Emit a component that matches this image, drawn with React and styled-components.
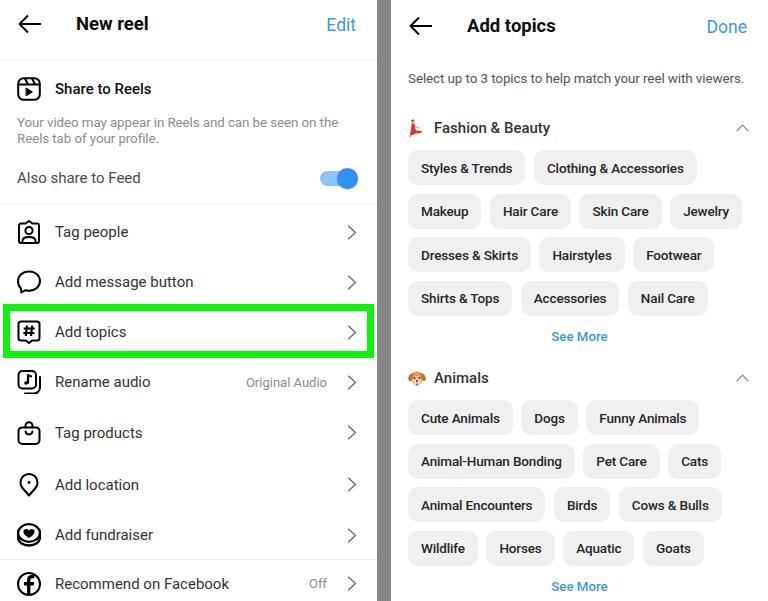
import React from 'react';
import styled, { createGlobalStyle } from 'styled-components';

const GlobalStyle = createGlobalStyle`
  html, body {
    margin: 0;
    padding: 0;
    background: #fff;
    font-family: Roboto, "Liberation Sans", sans-serif;
  }
`

const Line = (props) => (
  <svg viewBox="0 0 24 24" fill="none" stroke="#000" strokeWidth="2" strokeLinecap="round" strokeLinejoin="round" {...props} />
)

const BackArrow = () => (
  <Line width="24" height="24">
    <path d="M23 12H1.500M10 3.500L1.500 12l8.500 8.500" strokeWidth="1.900" strokeLinecap="butt" />
  </Line>
)

const ReelsIcon = () => (
  <Line width="24" height="24">
    <rect x="1.200" y="1.200" width="21.600" height="21.600" rx="5.500" />
    <path d="M1.500 7.400h21M8 1.500l3 5.800M15 1.500l3 5.800" />
    <path d="M9.400 11.200l6 3.700-6 3.700z" fill="#000" strokeWidth="1" />
  </Line>
)

const TagIcon = () => (
  <Line width="24" height="24">
    <path d="M8.500 3.500L12 1l3.500 2.500H20a2 2 0 0 1 2 2V21a2 2 0 0 1-2 2H4a2 2 0 0 1-2-2V5.500a2 2 0 0 1 2-2z" />
    <circle cx="12" cy="10.500" r="3.600" />
    <path d="M5.500 22.500v-1.500c0-2.500 2.500-4 6.500-4s6.500 1.500 6.500 4v1.500" />
  </Line>
)

const MessageIcon = () => (
  <Line width="24" height="24">
    <path d="M12 1.500c6.200 0 11 4 11 9.600s-4.800 9.600-11 9.600c-1.300 0-2.500-.2-3.600-.5L4.300 22.500l-.3-4C2 16.600 1 14.100 1 11.100 1 5.500 5.800 1.500 12 1.500z" />
  </Line>
)

const HashIcon = () => (
  <Line width="24" height="24">
    <path d="M4 1.500h16a2.500 2.500 0 0 1 2.500 2.500v14a2.500 2.500 0 0 1-2.500 2.500h-5L12 23l-3-2.500H4A2.500 2.500 0 0 1 1.500 18V4A2.500 2.500 0 0 1 4 1.500z" />
    <path d="M10 5.500L8.800 16M15.200 5.500L14 16M6.700 8.500h11M6.300 13h11" strokeWidth="2.200" strokeLinecap="butt" />
  </Line>
)

const AudioIcon = () => (
  <Line width="24" height="24">
    <rect x="1.500" y="1" width="17.500" height="17.500" rx="4" />
    <path d="M23 7v10.500a6 6 0 0 1-6 6H8" />
    <path d="M11 5v8" strokeWidth="2.200" />
    <path d="M11 5.500l3 .8" strokeWidth="2.200" />
    <circle cx="9" cy="13" r="1.800" fill="#000" stroke="none" />
  </Line>
)

const BagIcon = () => (
  <Line width="24" height="24">
    <path d="M5 6.500h14a3.500 3.500 0 0 1 3.500 3.500v9a4 4 0 0 1-4 4h-13a4 4 0 0 1-4-4v-9A3.500 3.500 0 0 1 5 6.500z" />
    <path d="M8.500 6.500V4.800a3.500 3.500 0 0 1 7 0v1.700" />
    <path d="M8.500 10.500c.5 2 1.800 3 3.500 3s3-1 3.500-3" />
  </Line>
)

const PinIcon = () => (
  <Line width="24" height="24">
    <path d="M12 22.500L5.520 15a8.500 8.500 0 1 1 12.960 0z" />
    <circle cx="12" cy="9.500" r="1.400" fill="#000" stroke="none" />
  </Line>
)

const FundIcon = () => (
  <Line width="24" height="24" strokeWidth="2.300">
    <ellipse cx="12" cy="10" rx="11" ry="8.800" />
    <path d="M1 10.500v4c0 4.800 5 8 11 8s11-3.200 11-8v-4" />
    <path d="M12 15c-3.400-2.200-5.600-3.800-5.600-6 0-1.700 1.200-2.900 2.800-2.900 1.200 0 2.200.6 2.800 1.700.6-1.100 1.600-1.700 2.800-1.700 1.600 0 2.800 1.200 2.800 2.900 0 2.200-2.200 3.800-5.600 6z" fill="#000" stroke="none" />
  </Line>
)

const FacebookIcon = () => (
  <Line width="24" height="24">
    <circle cx="12" cy="12" r="11" />
    <path d="M13.400 23v-9.500h3.300l.5-3.500h-3.800V8c0-1.100.5-1.800 1.900-1.800h2V3.200c-.6-.1-1.600-.2-2.700-.2-2.800 0-4.500 1.700-4.500 4.500V10H7v3.500h3.100V23z" fill="#000" stroke="none" />
  </Line>
)

const ChevronRight = () => (
  <svg width="10" height="15" viewBox="0 0 10 15" fill="none" stroke="#6e6e6e" strokeWidth="1.400">
    <path d="M1.200 .8l7.300 6.700-7.300 6.700" />
  </svg>
)

const ChevronUp = () => (
  <svg width="13" height="8" viewBox="0 0 13 8" fill="none" stroke="#8a8a8a" strokeWidth="1.200">
    <path d="M.6 7.400L6.500 1.200l5.900 6.200" />
  </svg>
)

const DancerEmoji = () => (
  <svg width="15" height="18" viewBox="0 0 15 18">
    <circle cx="5" cy="2.500" r="1.800" fill="#e8a060" />
    <path d="M3 2.300A2.300 2.300 0 0 1 6.500 1L5 2z" fill="#7a3a1c" />
    <path d="M4.500 4.500l3 2.500 4 1.500-.3.900-4.500-1.300-2.500-2z" fill="#e8a060" />
    <path d="M3.800 4.500h2.500l.7 4.500 1 2.500 6.500 .8c-1 1.800-4 2.500-6.500 2L3.500 16.500H1.500L3 11z" fill="#d8322a" />
    <path d="M3.200 15l-.2 3H1l.5-2z" fill="#e8a060" />
  </svg>
)

const DogEmoji = () => (
  <svg width="18" height="16" viewBox="0 0 18 16">
    <ellipse cx="9" cy="8.500" rx="6" ry="7" fill="#f3c48a" />
    <path d="M5 3C2.500 3 0 6 .2 9c.2 2 2 2.800 3.300 1.800C5 9 5.800 5 6.500 2.800z" fill="#c8742c" />
    <path d="M13 3c2.500 0 5 3 4.800 6-.2 2-2 2.800-3.300 1.800C13 9 12.200 5 11.500 2.800z" fill="#c8742c" />
    <path d="M5.500 3.300C7 1 11 1 12.500 3.300L11 6H7z" fill="#e29a4e" />
    <circle cx="6.500" cy="8" r=".9" fill="#3a2414" />
    <circle cx="11.500" cy="8" r=".9" fill="#3a2414" />
    <ellipse cx="9" cy="12" rx="2.800" ry="2.800" fill="#fbe4c4" />
    <ellipse cx="9" cy="10.800" rx="1.200" ry=".9" fill="#3a2414" />
    <path d="M8 13.500h2v1.300a1 1 0 0 1-2 0z" fill="#d8504a" />
  </svg>
)

const rows = [
  { icon: TagIcon, text: 'Tag people', height: 50 },
  { icon: MessageIcon, text: 'Add message button', height: 50 },
  { icon: HashIcon, text: 'Add topics', height: 50, marked: true },
  { icon: AudioIcon, text: 'Rename audio', value: 'Original Audio', height: 50 },
  { icon: BagIcon, text: 'Tag products', height: 51 },
  { icon: PinIcon, text: 'Add location', height: 53 },
  { icon: FundIcon, text: 'Add fundraiser', height: 48 },
]

const sections = [
  {
    emoji: DancerEmoji,
    title: 'Fashion & Beauty',
    chips: [
      'Styles & Trends', 'Clothing & Accessories', 'Makeup', 'Hair Care', 'Skin Care', 'Jewelry',
      'Dresses & Skirts', 'Hairstyles', 'Footwear', 'Shirts & Tops', 'Accessories', 'Nail Care',
    ],
  },
  {
    emoji: DogEmoji,
    title: 'Animals',
    chips: [
      'Cute Animals', 'Dogs', 'Funny Animals', 'Animal-Human Bonding', 'Pet Care', 'Cats',
      'Animal Encounters', 'Birds', 'Cows & Bulls', 'Wildlife', 'Horses', 'Aquatic', 'Goats',
    ],
  },
]

function App() {
  return (
    <Page>
      <GlobalStyle />
      <Panel>
        <Header $border>
          <BackButton><BackArrow /></BackButton>
          <Title>New reel</Title>
          <Action>Edit</Action>
        </Header>
        <ShareBlock>
          <ShareTitle>
            <IconSlot><ReelsIcon /></IconSlot>
            <strong>Share to Reels</strong>
          </ShareTitle>
          <ShareNote>Your video may appear in Reels and can be seen on the Reels tab of your profile.</ShareNote>
          <FeedRow>
            Also share to Feed
            <Toggle />
          </FeedRow>
        </ShareBlock>
        <RowList>
          {rows.map(({ icon: Icon, text, value, height, marked }) => (
            <Row key={text} $height={height} $marked={marked}>
              <IconSlot><Icon /></IconSlot>
              <RowText>{text}</RowText>
              {value && <RowValue>{value}</RowValue>}
              <ChevronRight />
            </Row>
          ))}
        </RowList>
        <LastRow>
          <IconSlot><FacebookIcon /></IconSlot>
          <RowText>Recommend on Facebook</RowText>
          <RowValue>Off</RowValue>
          <ChevronRight />
        </LastRow>
      </Panel>
      <Divider />
      <Panel>
        <Header>
          <BackButton><BackArrow /></BackButton>
          <Title>Add topics</Title>
          <Action>Done</Action>
        </Header>
        <Intro>Select up to 3 topics to help match your reel with viewers.</Intro>
        {sections.map(({ emoji: Emoji, title, chips }) => (
          <Section key={title}>
            <SectionHead>
              <EmojiSlot><Emoji /></EmojiSlot>
              <SectionTitle>{title}</SectionTitle>
              <ChevronUp />
            </SectionHead>
            <Chips>
              {chips.map((chip) => <Chip key={chip}>{chip}</Chip>)}
            </Chips>
            <SeeMore>See More</SeeMore>
          </Section>
        ))}
      </Panel>
    </Page>
  );
}

const Page = styled.div`
  display: flex;
  width: 768px;
  height: 601px;
  overflow: hidden;
  background: #fff;
`

const Panel = styled.div`
  width: 377px;
  flex-shrink: 0;
`

const Divider = styled.div`
  width: 14px;
  flex-shrink: 0;
  background: #878787;
`

const Header = styled.header`
  display: flex;
  align-items: center;
  box-sizing: border-box;
  height: ${props => props.$border ? '60px' : '52px'};
  padding: 0 21px 0 18px;
  padding-bottom: ${props => props.$border ? '11px' : '0'};
  border-bottom: ${props => props.$border ? '1px solid #f3f3f3' : 'none'};
`

const BackButton = styled.div`
  display: flex;
  width: 58px;
  flex-shrink: 0;
`

const Title = styled.h1`
  flex: 1;
  margin: 0;
  font-size: 18.500px;
  font-weight: 700;
  color: #0c0c0c;
`

const Action = styled.span`
  font-size: 17.500px;
  color: #3a9be0;
  margin-top: 2px;
`

const ShareBlock = styled.section`
  height: 145px;
  padding: 17px 18px 0 17px;
  box-sizing: border-box;
  border-bottom: 1px solid #f3f3f3;
`

const ShareTitle = styled.div`
  display: flex;
  align-items: center;
  height: 24px;

  strong {
    font-size: 15px;
    font-weight: 500;
    color: #111;
  }
`

const IconSlot = styled.div`
  display: flex;
  width: 38px;
  flex-shrink: 0;
`

const ShareNote = styled.p`
  margin: 14px 0 0;
  width: 335px;
  font-size: 13.400px;
  letter-spacing: -0.1px;
  line-height: 16px;
  color: #8c8c8c;
`

const FeedRow = styled.div`
  display: flex;
  align-items: center;
  justify-content: space-between;
  margin-top: 22px;
  font-size: 15px;
  color: #4a4a4a;
`

const Toggle = styled.div`
  position: relative;
  width: 38px;
  height: 15px;
  margin-right: 1px;
  border-radius: 8px;
  background: #8cc4f5;

  &::after {
    content: '';
    position: absolute;
    top: -2.500px;
    right: 0;
    width: 21px;
    height: 21px;
    border-radius: 50%;
    background: #3390ec;
    box-shadow: 0 1px 2px rgba(0, 0, 0, 0.2);
  }
`

const RowList = styled.div`
  padding-top: 2px;
`

const Row = styled.div`
  position: relative;
  display: flex;
  align-items: center;
  height: ${props => props.$height}px;
  padding: 0 20px 0 17px;
  box-sizing: border-box;

  ${props => props.$marked && `
    &::after {
      content: '';
      position: absolute;
      left: 3px;
      right: 3px;
      top: -3px;
      bottom: -1px;
      border: 7px solid #0ef20e;
    }
  `}
`

const LastRow = styled(Row)`
  height: 48px;
  border-top: 1px solid #f0f0f0;
`

const RowText = styled.span`
  flex: 1;
  font-size: 15px;
  color: #333;
`

const RowValue = styled.span`
  margin-right: 20px;
  font-size: 13px;
  color: #8c8c8c;
`

const Intro = styled.p`
  margin: 0;
  padding: 19px 0 0 17px;
  font-size: 13.450px;
  letter-spacing: -0.1px;
  line-height: 16px;
  color: #555;
`

const Section = styled.section`
  padding: 0 17px;
  margin-top: 29px;

  & + & {
    margin-top: 21.500px;
  }
`

const SectionHead = styled.div`
  display: flex;
  align-items: center;
  height: 24px;
  margin-bottom: 10px;
  padding-right: 2px;
`

const EmojiSlot = styled.div`
  display: flex;
  width: 26px;
  flex-shrink: 0;
`

const SectionTitle = styled.h2`
  flex: 1;
  margin: 0;
  font-size: 15px;
  font-weight: 500;
  color: #333;
`

const Chips = styled.div`
  display: flex;
  flex-wrap: wrap;
  gap: 8.500px;
`

const Chip = styled.span`
  display: flex;
  align-items: center;
  height: 35px;
  padding: 0 13px;
  border-radius: 10px;
  background: #f0f0f0;
  font-size: 13.500px;
  letter-spacing: -0.150px;
  font-weight: 500;
  color: #262626;
`

const SeeMore = styled.div`
  margin-top: 13px;
  text-align: center;
  font-size: 13.300px;
  font-weight: 500;
  color: #3a9be0;
  line-height: 16px;
`

export default App;
